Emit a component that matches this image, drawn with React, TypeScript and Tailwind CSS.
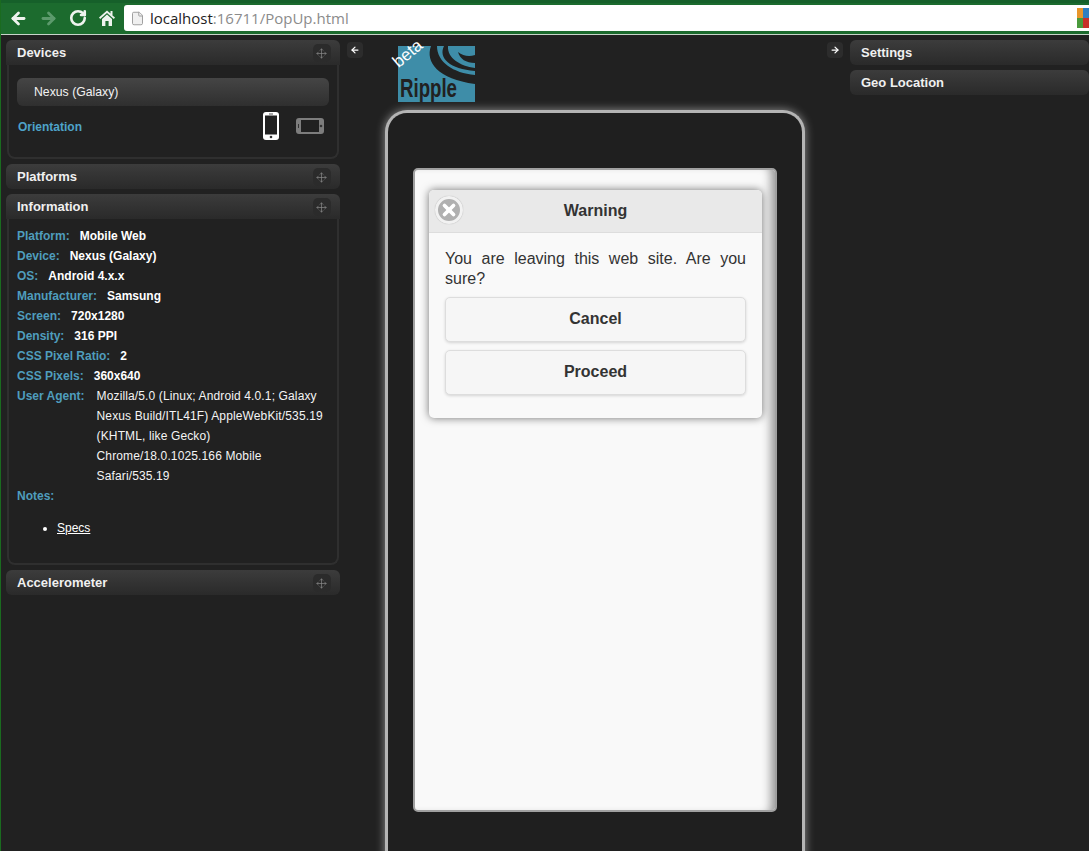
import { ArrowLeft, ArrowRight, Move, RotateCw, File, X } from 'lucide-react';

const FONT = "font-['Liberation_Sans',Arial,sans-serif]";

const INFO_ROWS = [
  { label: 'Platform:', value: 'Mobile Web' },
  { label: 'Device:', value: 'Nexus (Galaxy)' },
  { label: 'OS:', value: 'Android 4.x.x' },
  { label: 'Manufacturer:', value: 'Samsung' },
  { label: 'Screen:', value: '720x1280' },
  { label: 'Density:', value: '316 PPI' },
  { label: 'CSS Pixel Ratio:', value: '2' },
  { label: 'CSS Pixels:', value: '360x640' },
];

const PanelHeader = ({ title, grip = true, open = false }: { title: string; grip?: boolean; open?: boolean }) => (
  <div
    className={`h-[25px] flex items-center justify-between pl-[11px] pr-[9px] bg-gradient-to-b from-[#3c3c3c] to-[#2a2a2a] ${
      open ? 'rounded-t-[6px]' : 'rounded-[6px]'
    }`}
  >
    <span className="text-[13px] font-bold text-[#f0f0f0] leading-none">{title}</span>
    {grip && (
      <span className="mt-[1px] w-[18px] h-[18px] rounded-[5px] bg-[#2b2b2b] flex items-center justify-center">
        <Move className="mr-[1px] w-[11px] h-[11px] text-[#8a8a8a]" strokeWidth={1.5} />
      </span>
    )}
  </div>
);

const PanelBody = ({ children, className }: { children: React.ReactNode; className: string }) => (
  <div className={`mx-[1px] border-2 border-t-0 border-[#2f2f2f] rounded-b-[8px] bg-[#212121] ${className}`}>{children}</div>
);

const ToggleButton = ({ right = false }: { right?: boolean }) => (
  <span className="w-[16px] h-[16px] rounded-[4px] bg-[#2c2c2c] flex items-center justify-center">
    {right ? (
      <ArrowRight className="w-[10px] h-[10px] text-white" strokeWidth={3} />
    ) : (
      <ArrowLeft className="w-[10px] h-[10px] text-white" strokeWidth={3} />
    )}
  </span>
);

const RippleLogo = () => (
  <div className="relative w-[77px] h-[56px] mt-[6px] ml-[13px]">
    <svg viewBox="0 0 77 56" className="w-[77px] h-[56px] block overflow-visible">
      <rect width="77" height="56" fill="#3e8da8" />
      <path d="M33 0 C27 16 40 33 77 38 L77 29 C55 27 39 16 39 0 Z" fill="#212121" />
      <path d="M46 0 C40 12 52 23 77 25 L77 22 C62 20 49 12 50 0 Z" fill="#212121" />
      <path d="M60 6 C62 13 68 17 77 17 L77 9 C71 11 65 10 60 6 Z" fill="#212121" />
      <text
        x="2"
        y="50.5"
        fontFamily="'Liberation Sans', Arial, sans-serif"
        fontSize="26"
        fontWeight="700"
        fill="#212121"
        textLength="57"
        lengthAdjust="spacingAndGlyphs"
      >
        Ripple
      </text>
    </svg>
    <span className="absolute left-[-7px] top-[-1px] text-[17px] leading-none text-white -rotate-[40deg]">beta</span>
  </div>
);

const DialogButton = ({ label }: { label: string }) => (
  <button className="w-full h-[45px] pb-[2px] rounded-[5px] border border-[#dddddd] bg-[#f6f6f6] shadow-[0_1px_3px_rgba(0,0,0,0.15)] text-[16px] font-bold text-[#333333]">
    {label}
  </button>
);

export default function App() {
  return (
    <div className={`${FONT} w-[1089px] h-[851px] overflow-hidden flex flex-col bg-[#212121] border-l border-[#1a6b1f]`}>
      {/* browser toolbar */}
      <div className="h-[35px] shrink-0 flex items-center bg-[#1c6b2e] border-t-[3px] border-b border-t-[#16602a] border-b-[#c9d4cb] pb-[1px]">
        <div className="w-[123px] flex items-center pl-[8px] gap-[11px]">
          <ArrowLeft className="w-[19px] h-[19px] text-[#eef3ee]" strokeWidth={3.5} />
          <ArrowRight className="w-[19px] h-[19px] text-[#5c9a6c]" strokeWidth={3.5} />
          <RotateCw className="w-[18px] h-[18px] text-[#eef3ee]" strokeWidth={3.5} />
          <svg width="16" height="16" viewBox="0 0 16 16" className="ml-[1px]">
            <path d="M8 0.5 L11.5 3.6 L11.5 1 L13.5 1 L13.5 5.4 L16 7.6 L14.8 9 L8 3 L1.2 9 L0 7.6 Z" fill="#eef3ee" />
            <path d="M3 9 L8 4.6 L13 9 L13 16 L9.6 16 L9.6 11 L6.4 11 L6.4 16 L3 16 Z" fill="#eef3ee" />
          </svg>
        </div>
        <div className="flex-1 h-[26px] bg-white rounded-l-[3px] flex items-center pl-[6px] gap-[5px] relative">
          <File className="w-[15px] h-[15px] text-[#9a9a9a] fill-[#f0f0f0]" strokeWidth={1.5} />
          <span className="text-[15px] text-[#222222] font-['Open_Sans',sans-serif] leading-none">
            localhost<span className="text-[#8b8b8b]">:16711/PopUp.html</span>
          </span>
          <div className="absolute right-0 top-[3px] w-[12px] h-[20px] grid grid-cols-2 grid-rows-2">
            <span className="bg-[#e8962a]" />
            <span className="bg-[#2f7fc0]" />
            <span className="bg-[#4a9a3c]" />
            <span className="bg-[#c8302a]" />
          </div>
        </div>
      </div>

      <div className="flex-1 min-h-0 flex items-start pt-[5px] pl-[5px]">
        {/* left panels */}
        <div className="w-[334px] shrink-0 flex flex-col gap-[5px]">
          <div>
            <PanelHeader title="Devices" open />
            <PanelBody className="h-[94px] pt-[13px] px-[8px]">
              <div className="h-[28px] rounded-[6px] bg-gradient-to-b from-[#454545] to-[#2f2f2f] flex items-center pl-[17px] text-[12.25px] text-[#f2f2f2]">
                Nexus (Galaxy)
              </div>
              <div className="flex items-center justify-between mt-[6px] pr-[5px]">
                <span className="pl-[1px] pt-[2px] text-[12px] font-bold text-[#4ea3c9]">Orientation</span>
                <div className="flex items-center gap-[17px]">
                  <svg width="16" height="28" viewBox="0 0 16 28">
                    <rect width="16" height="28" rx="3" fill="#ffffff" />
                    <rect x="2" y="3.5" width="12" height="19" fill="#212121" />
                    <rect x="6" y="1.5" width="4" height="1" fill="#555555" />
                    <circle cx="8" cy="25" r="1.3" fill="#333333" />
                  </svg>
                  <svg width="28" height="16" viewBox="0 0 28 16">
                    <rect width="28" height="16" rx="3" fill="#7d7d7d" />
                    <rect x="5" y="2" width="18" height="12" fill="#212121" />
                    <rect x="2" y="6" width="1" height="4" fill="#333333" />
                    <circle cx="25" cy="8" r="1.3" fill="#333333" />
                  </svg>
                </div>
              </div>
            </PanelBody>
          </div>

          <PanelHeader title="Platforms" />

          <div>
            <PanelHeader title="Information" open />
            <PanelBody className="h-[346px] pt-[7px] px-[8px] text-[12px] leading-[20px]">
              {INFO_ROWS.map((row) => (
                <div key={row.label} className="flex font-bold">
                  <span className="text-[#4f9dbd]">{row.label}</span>
                  <span className="ml-[10px] text-white">{row.value}</span>
                </div>
              ))}
              <div className="flex">
                <span className="font-bold text-[#4f9dbd] shrink-0">User Agent:</span>
                <span className="ml-[12px] text-[#f4f4f4] w-[230px] tracking-[0.13px]">
                  Mozilla/5.0 (Linux; Android 4.0.1; Galaxy Nexus Build/ITL41F) AppleWebKit/535.19 (KHTML, like Gecko) Chrome/18.0.1025.166 Mobile Safari/535.19
                </span>
              </div>
              <div className="font-bold text-[#4f9dbd]">Notes:</div>
              <ul className="list-disc pl-[40px] mt-[12px] text-white">
                <li>
                  <a className="underline">Specs</a>
                </li>
              </ul>
            </PanelBody>
          </div>

          <PanelHeader title="Accelerometer" />
        </div>

        {/* left toggle */}
        <div className="ml-[7px] mt-[2px] shrink-0">
          <ToggleButton />
        </div>

        {/* device */}
        <div className="w-[464px] shrink-0 pl-[22px] flex flex-col">
          <RippleLogo />
          <div className="mt-[8px] w-[420px] h-[760px] rounded-t-[22px] border-[3px] border-b-0 border-[#b4b4b4] bg-[#1f1f1f] shadow-[0_0_10px_rgba(255,255,255,0.5)] pt-[55px] pl-[25px]">
            <div className="relative w-[364px] h-[644px] rounded-[5px] border-2 border-[#a0a0a0] bg-[#f9f9f9] shadow-[inset_-10px_0_10px_-6px_rgba(0,0,0,0.4)] pt-[20px] px-[14px]">
              <div className="w-[333px] h-[228px] rounded-[5px] bg-[#f9f9f9] shadow-[0_0_9px_rgba(0,0,0,0.55)] overflow-hidden">
                <div className="relative h-[43px] bg-[#e9e9e9] border-b border-[#dddddd] flex items-center justify-center">
                  <span className="absolute left-[6px] top-[6px] w-[28px] h-[28px] rounded-full bg-[#b0b0b0] border-[3px] border-[#f2f2f2] shadow-[0_0_1px_rgba(0,0,0,0.3)] flex items-center justify-center">
                    <X className="w-[18px] h-[18px] text-white" strokeWidth={5} />
                  </span>
                  <span className="text-[16px] font-bold text-[#333333]">Warning</span>
                </div>
                <div className="px-[16px] pt-[16px]">
                  <p className="text-[16px] leading-[20px] text-[#333333] text-justify">
                    You are leaving this web site. Are you sure?
                  </p>
                  <div className="mt-[8px] flex flex-col gap-[8px]">
                    <DialogButton label="Cancel" />
                    <DialogButton label="Proceed" />
                  </div>
                </div>
              </div>
            </div>
          </div>
        </div>

        {/* right toggle */}
        <div className="mt-[2px] shrink-0">
          <ToggleButton right />
        </div>

        {/* right panels */}
        <div className="ml-[7px] flex-1 flex flex-col gap-[5px]">
          <PanelHeader title="Settings" grip={false} />
          <PanelHeader title="Geo Location" grip={false} />
        </div>
      </div>
    </div>
  );
}
